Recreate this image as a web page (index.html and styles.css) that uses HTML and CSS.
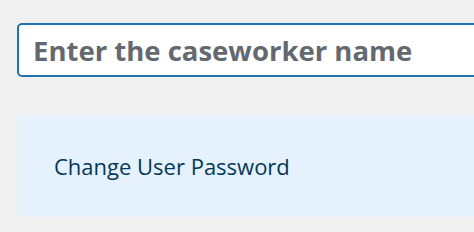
FILE: index.html
```html
<!DOCTYPE html>
<html lang="en">
<head>
  <meta charset="UTF-8">
  <title>Caseworker</title>
  <link rel="stylesheet" href="styles.css">
</head>
<body>
  <div class="wrap">
    <input type="text" class="search" placeholder="Enter the caseworker name">
    <div class="card">
      <span class="card-title">Change User Password</span>
    </div>
  </div>
</body>
</html>
```

FILE: styles.css
```css
html, body {
  margin: 0;
  background: #f0f0f1;
  font-family: "Open Sans", sans-serif;
  overflow: hidden;
}

.wrap {
  padding: 23px 0 0 17px;
  width: 520px;
}

.search {
  display: block;
  box-sizing: border-box;
  width: 100%;
  height: 54px;
  margin: 0;
  padding: 0 14px;
  border: 2px solid #2271b1;
  border-radius: 5px;
  background: #fff;
  font-family: "Open Sans", sans-serif;
  font-size: 27.5px;
  font-weight: 700;
  color: #2c3338;
  outline: none;
}

.search::placeholder {
  color: #646970;
  opacity: 1;
}

.card {
  margin-top: 38px;
  height: 102px;
  padding: 0 37px;
  display: flex;
  align-items: center;
  background: #e5f1fc;
  box-shadow: 0 1px 1px rgba(0, 0, 0, 0.06);
}

.card-title {
  font-size: 22px;
  color: #043959;
}
```
